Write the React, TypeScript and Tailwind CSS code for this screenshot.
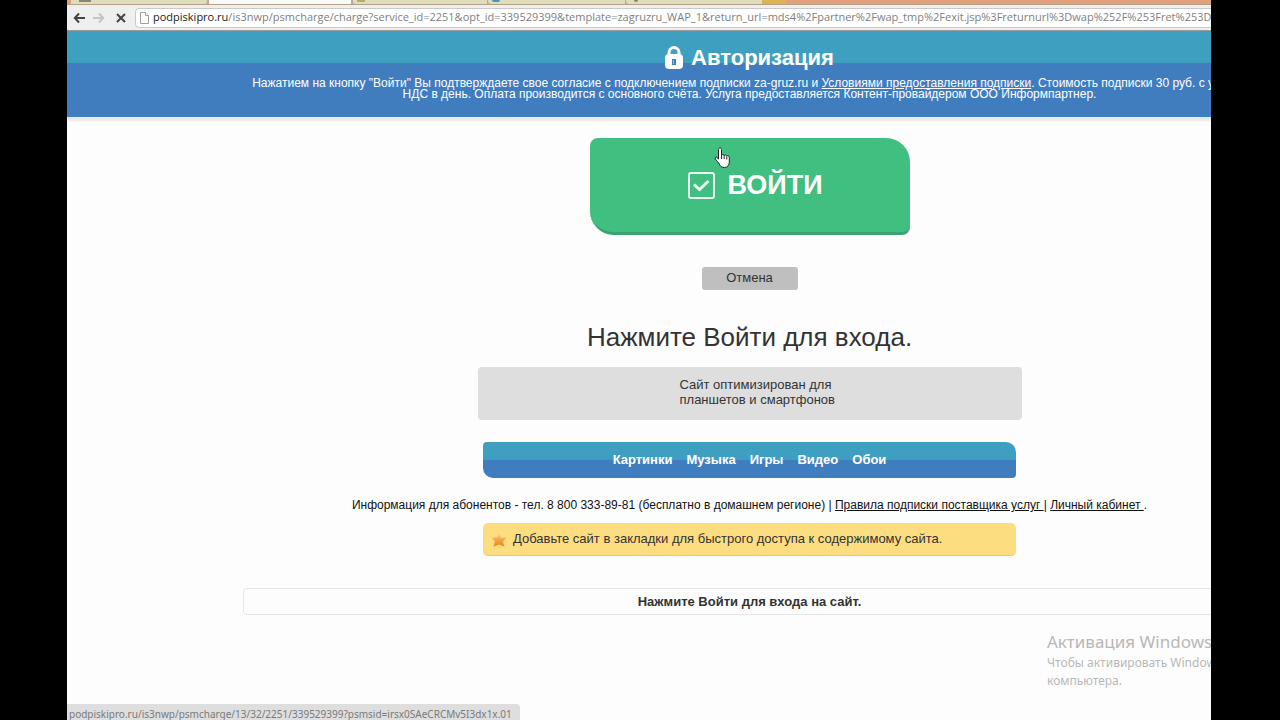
import React from "react";

const navLinks = ["Картинки", "Музыка", "Игры", "Видео", "Обои"];

function TabStrip() {
  return (
    <div className="flex h-[5px] overflow-hidden border-b border-[#b5a284] bg-[#e2a07c]">
      <div className="ml-1 w-[138px] rounded-br-lg border-r-2 border-[#b9a9a0] bg-[#dfdebc]">
        <div className="ml-2 h-[2px] w-3 bg-[#85857c]" />
      </div>
      <div className="w-[142px] bg-[#fbfafa]" />
      <div className="w-[136px] rounded-bl-lg border-l-2 border-[#b9a9a0] bg-[#dfdebc]">
        <div className="ml-1 h-[2px] w-2 bg-[#c3a66a]" />
      </div>
      <div className="w-[138px] rounded-bl-lg border-l border-[#c9a09a] bg-[#dfdebc]">
        <div className="ml-1 h-[2px] w-2 rounded-b bg-[#4a95bd]" />
      </div>
      <div className="w-[137px] rounded-bl-lg border-l border-[#c9a09a] bg-[#dfdebc]">
        <div className="ml-2 h-[2px] w-1 rounded-b bg-[#7d8a66]" />
      </div>
      <div className="w-6 rounded-bl-lg bg-[#dcb451]" />
    </div>
  );
}

function Toolbar() {
  return (
    <div className="flex h-[26px] items-center border-b border-[#9a9a9a] bg-[#efefef] pl-[2px]">
      <button aria-label="Назад" className="flex w-5 justify-center">
        <svg width="12" height="12" viewBox="0 0 12 12" fill="none" stroke="#444" strokeWidth="2">
          <path d="M6 1.500L1.800 6 6 10.500M2 6h10" />
        </svg>
      </button>
      <button aria-label="Вперёд" className="flex w-5 justify-center">
        <svg width="12" height="12" viewBox="0 0 12 12" fill="none" stroke="#c4c4c4" strokeWidth="2">
          <path d="M6 1.500L10.200 6 6 10.500M10 6H0" />
        </svg>
      </button>
      <button aria-label="Остановить" className="flex w-6 justify-center">
        <svg width="10" height="10" viewBox="0 0 10 10" fill="none" stroke="#444" strokeWidth="2">
          <path d="M1 1l8 8M9 1L1 9" />
        </svg>
      </button>
      <div className="-mr-2 ml-[2px] flex h-5 flex-1 items-center overflow-hidden rounded-sm border border-[#c9c9c9] bg-white pl-1">
        <svg width="9" height="12" viewBox="0 0 9 12" className="mr-1 shrink-0" fill="#fff" stroke="#a0a0a0">
          <path d="M.5.5h5l3 3v8h-8z" />
          <path d="M5.500 .5v3h3" />
        </svg>
        <span className="font-['Open_Sans','Noto_Sans',sans-serif] text-[11px] whitespace-nowrap text-[#808080]">
          <span className="text-[#222]">podpiskipro.ru</span>
          /is3nwp/psmcharge/charge?service_id=2251&amp;opt_id=339529399&amp;template=zagruzru_WAP_1&amp;return_url=mds4%2Fpartner%2Fwap_tmp%2Fexit.jsp%3Freturnurl%3Dwap%252F%253Fret%253Dhttp
        </span>
      </div>
    </div>
  );
}

function LockIcon() {
  return (
    <svg width="18" height="24" viewBox="0 0 18 24">
      <path d="M4 10V6.500a5 5 0 0 1 10 0V10" fill="none" stroke="#fff" strokeWidth="3" />
      <rect x="0" y="8" width="18" height="15" rx="4" fill="#fff" />
      <path d="M7 13h4v6H7z" fill="#3f7dbf" />
      <path d="M8 14h1v4H8z" fill="#9cc4e4" />
    </svg>
  );
}

function CheckIcon() {
  return (
    <svg width="27" height="27" viewBox="0 0 27 27" fill="none" stroke="#e9fbf0">
      <rect x="1" y="1" width="25" height="25" rx="2" strokeWidth="2" />
      <path d="M6 12.500l5.500 5L20.500 9" strokeWidth="3" />
    </svg>
  );
}

function HandCursor() {
  return (
    <svg width="17" height="23" viewBox="0 0 17 23" className="pointer-events-none absolute top-[9px] left-[124px]">
      <path
        d="M4.500 2.500c0-2 3-2 3 0v6c.2-1.500 2.600-1.300 2.600.3.300-1.300 2.600-1 2.600.6.400-1.200 2.600-.8 2.600.8v5c0 2.500-1.500 5.300-5 5.300-3 0-4-1.500-5-3.500-1-2-2.500-3-4-5-.7-1.700 1-2.600 2-1.300l1.200 1.500z"
        fill="#fff"
        stroke="#222"
      />
      <path d="M7.600 8.500v3.500M10.200 9v3M12.800 10v2.500" stroke="#222" fill="none" />
    </svg>
  );
}

function StarIcon() {
  return (
    <svg width="16" height="15" viewBox="0 0 16 15" className="shrink-0">
      <defs>
        <linearGradient id="star" x1="0" y1="0" x2="0" y2="1">
          <stop offset="0" stopColor="#fbdc98" />
          <stop offset="0.5" stopColor="#f2a548" />
          <stop offset="1" stopColor="#ea8212" />
        </linearGradient>
      </defs>
      <path d="M8 1l2 4.500 5.500.3-3.500 3.700 1.500 5L8 12.500l-5.500 2 1.500-5L.5 5.800 6 5.500z" fill="url(#star)" />
    </svg>
  );
}

export default function App() {
  return (
    <div className="h-screen overflow-hidden bg-black pr-[69px] pl-[67px] font-['Liberation_Sans',Arial,sans-serif]">
      <div className="relative flex h-full flex-col overflow-hidden bg-[#fdfdfd]">
        <TabStrip />
        <Toolbar />

        {/* the page is wider than the visible part of the window */}
        <div className="-mr-[221px] flex flex-col items-center text-[#333]">
          <header className="flex w-full flex-col items-center bg-linear-to-b from-[#3f9fc0] from-[32px] to-[#3f7dbf] to-[32px] pt-3 pb-[17px] text-white shadow-[0_4px_2px_#ebe8ea]">
            <h1 className="flex items-center gap-2 text-[22px] leading-[30px] font-bold">
              <LockIcon />
              Авторизация
            </h1>
            <p className="mt-[5px] w-[1013px] text-center text-[12px] leading-[11px]">
              Нажатием на кнопку "Войти" Вы подтверждаете свое согласие с подключением подписки za-gruz.ru и{" "}
              <a href="#terms" className="underline">Условиями предоставления подписки</a>. Стоимость подписки 30 руб. с учетом
              НДС в день. Оплата производится с основного счёта. Услуга предоставляется Контент-провайдером ООО Информпартнер.
            </p>
          </header>

          <div className="relative mt-[21px]">
            <button className="flex h-[97px] w-80 items-center justify-center gap-3 rounded-[8px_24px_8px_24px] border-b-3 border-[#3aa274] bg-[#40bf80] pl-3 text-[27px] font-bold text-white">
              <CheckIcon />
              ВОЙТИ
            </button>
            <HandCursor />
          </div>

          <button className="mt-8 h-[23px] w-24 rounded-[3px] bg-[#bfbfbf] pb-[2px] text-[13px] leading-5 text-[#333]">Отмена</button>

          <h2 className="mt-8 text-[26px] leading-[30px]">Нажмите Войти для входа.</h2>

          <div className="mt-[15px] flex w-[544px] justify-center rounded bg-[#dedede] pt-[10px] pb-[13px] text-[13px] leading-[15px]">
            <p className="w-[140px] whitespace-nowrap">
              Сайт оптимизирован для
              <br />
              планшетов и смартфонов
            </p>
          </div>

          <nav className="mt-[22px] flex h-9 w-[533px] items-center justify-center gap-[14px] rounded-[4px_10px_4px_10px] bg-linear-to-b from-[#3f9fc0] from-50% to-[#3f7dbf] to-50% text-[13px] font-bold text-white">
            {navLinks.map((item) => (
              <a key={item} href="#catalog">{item}</a>
            ))}
          </nav>

          <p className="mt-5 text-[12px] leading-[14px] text-[#111]">
            Информация для абонентов - тел. 8 800 333-89-81 (бесплатно в домашнем регионе) |{" "}
            <a href="#rules" className="underline">Правила подписки поставщика услуг </a>|{" "}
            <a href="#account" className="underline">Личный кабинет </a>.
          </p>

          <div className="mt-[11px] flex h-[33px] w-[533px] items-center gap-[6px] rounded-[5px] border-b border-[#e6c878] bg-[#fcdd7f] pl-2 text-[13px]">
            <StarIcon />
            Добавьте сайт в закладки для быстрого доступа к содержимому сайта.
          </div>

          <div className="mt-8 h-[27px] w-[1013px] rounded border border-[#e6e6e6] text-center text-[13px] leading-[25px] font-bold">
            Нажмите Войти для входа на сайт.
          </div>
        </div>

        {/* system watermark over the page */}
        <div className="absolute top-[631px] left-[980px] font-['Noto_Sans',sans-serif] whitespace-nowrap text-[#b8b8b8]">
          <p className="text-[17px] leading-[22px]">Активация Windows</p>
          <p className="pt-px text-[12px] leading-[18px]">
            Чтобы активировать Windows, перейдите
            <br />
            компьютера.
          </p>
        </div>

        {/* link preview */}
        <div className="absolute bottom-0 left-0 h-4 rounded-tr bg-[#dedede] pr-2 pl-[2px] font-['Noto_Sans',sans-serif] text-[10px] leading-5 whitespace-nowrap text-[#7a7a7a]">
          podpiskipro.ru/is3nwp/psmcharge/13/32/2251/339529399?psmsid=irsx0SAeCRCMv5I3dx1x.01
        </div>
      </div>
    </div>
  );
}
